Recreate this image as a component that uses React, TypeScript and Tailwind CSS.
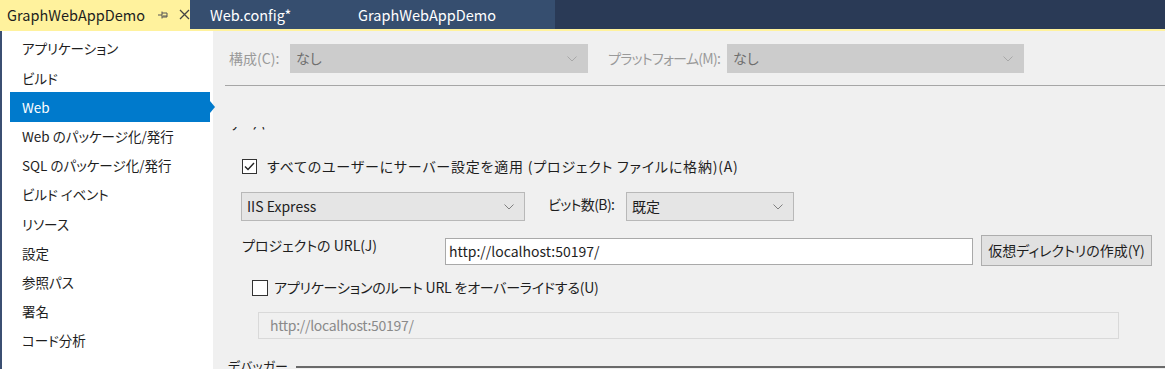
const items = [
  "アプリケーション",
  "ビルド",
  "Web",
  "Web のパッケージ化/発行",
  "SQL のパッケージ化/発行",
  "ビルド イベント",
  "リソース",
  "設定",
  "参照パス",
  "署名",
  "コード分析",
];

function Chevron({ color = "#8a8a8a" }: { color?: string }) {
  return (
    <svg width="10" height="6" viewBox="0 0 10 6">
      <path d="M0.5 0.5 L5 5 L9.5 0.5" fill="none" stroke={color} strokeWidth="1" />
    </svg>
  );
}

function Select({ text, width, disabled }: { text: string; width: string; disabled?: boolean }) {
  return (
    <div
      className={`${width} h-[29px] shrink-0 flex items-center justify-between pl-[5px] pr-[10px] border ${
        disabled ? "bg-[#cccccc] border-[#cccccc] text-[#6e6e6e]" : "bg-[#e5e5e5] border-[#b8b8b8] text-[#1e1e1e]"
      }`}
    >
      <span>{text}</span>
      <Chevron color={disabled ? "#a8a8a8" : "#808080"} />
    </div>
  );
}

function CheckBox({ checked, size }: { checked?: boolean; size: string }) {
  return (
    <div className={`${size} bg-white border border-[#333333] flex items-center justify-center shrink-0`}>
      {checked && (
        <svg width="11" height="9" viewBox="0 0 11 9">
          <path d="M1 4.5 L4 7.5 L10 1" fill="none" stroke="#222" strokeWidth="1.4" />
        </svg>
      )}
    </div>
  );
}

export default function App() {
  return (
    <div className="w-[1165px] h-[369px] overflow-hidden flex flex-col whitespace-nowrap text-[14px] text-[#1e1e1e] font-['Noto_Sans_CJK_JP','Noto_Sans',sans-serif] [font-feature-settings:'palt']">
      {/* tab strip */}
      <div className="h-[29px] flex bg-[#2a3a56] shrink-0">
        <div className="w-[190px] bg-[#fff29d] flex items-center pl-[7px] text-[14.5px] text-[#1e1e1e]">
          <span className="w-[143px]">GraphWebAppDemo</span>
          <svg className="ml-[8px]" width="11" height="10" viewBox="0 0 11 10">
            <path d="M0 5 H4 M4 1.5 V8.5 M4 3 H9 V7 H4 M5 6 H9" fill="none" stroke="#555" strokeWidth="1" />
          </svg>
          <svg className="ml-[10px]" width="11" height="11" viewBox="0 0 11 11">
            <path d="M1 1 L10 10 M10 1 L1 10" fill="none" stroke="#444" strokeWidth="1.3" />
          </svg>
        </div>
        <div className="w-[365px] bg-[#364e6f] flex items-center text-[14.5px] text-white">
          <span className="ml-[20px] w-[148px]">Web.config*</span>
          <span>GraphWebAppDemo</span>
        </div>
      </div>
      <div className="h-[2px] bg-[#fff29d] shrink-0" />

      <div className="flex flex-1 min-h-0">
        <div className="w-[2px] bg-[#3b4f72] shrink-0" />

        {/* sidebar */}
        <div className="w-[211px] bg-white pt-[3px] shrink-0 text-[13.5px]">
          {items.map((it) =>
            it === "Web" ? (
              <div key={it} className="h-[29.2px] relative ml-[8px] mr-[3px] bg-[#007acc] text-white flex items-center pl-[12px]">
                {it}
                <div className="absolute right-[-5px] top-1/2 -translate-y-1/2 w-0 h-0 border-y-[6px] border-y-transparent border-l-[5px] border-l-[#007acc]" />
              </div>
            ) : (
              <div key={it} className="h-[29.2px] flex items-center pl-[20px]">
                {it}
              </div>
            )
          )}
        </div>

        {/* content */}
        <div className="flex-1 bg-[#f0f0f0] min-w-0">
          <div className="pt-[13px] flex items-center">
            <span className="ml-[16px] w-[61px] shrink-0 text-[#9a9a9a]">構成(C):</span>
            <Select text="なし" width="w-[298px]" disabled />
            <span className="ml-[20px] w-[119px] shrink-0 text-[#9a9a9a] tracking-[-0.7px]">プラットフォーム(M):</span>
            <Select text="なし" width="w-[297px]" disabled />
          </div>
          <div className="mt-[12px] ml-[12px] h-px bg-[#a6a6a6]" />

          <div className="mt-[41px] ml-[15px] h-[6px] overflow-hidden">
            <div className="-mt-[13px] leading-[20px] text-[13px]">サーバー</div>
          </div>

          <div className="mt-[23px] ml-[29px] h-[20px] flex items-center">
            <CheckBox checked size="w-[15px] h-[15px]" />
            <span className="ml-[10px] tracking-[0.8px]">すべてのユーザーにサーバー設定を適用 (プロジェクト ファイルに格納)(A)</span>
          </div>

          <div className="mt-[16px] ml-[28px] flex items-center">
            <Select text="IIS Express" width="w-[284px]" />
            <span className="ml-[23px] w-[78px] shrink-0 -mt-[5px] tracking-[-0.6px]">ビット数(B):</span>
            <Select text="既定" width="w-[168px]" />
          </div>

          <div className="mt-[14px] ml-[29px] flex items-start">
            <span className="w-[203px] shrink-0 leading-[18px] mt-[1px]">プロジェクトの URL(J)</span>
            <div className="w-[528px] h-[27px] mt-[3px] shrink-0 bg-white border border-[#a9a9a9] flex items-center pl-[3px]">
              http://localhost:50197/
            </div>
            <div className="ml-[8px] w-[171px] h-[31px] shrink-0 bg-[#e1e1e1] border border-[#adadad] flex items-center justify-center">
              仮想ディレクトリの作成(Y)
            </div>
          </div>

          <div className="mt-[12px] ml-[39px] h-[19px] flex items-center">
            <CheckBox size="w-[16px] h-[16px]" />
            <span className="ml-[6px] tracking-[-0.2px]">アプリケーションのルート URL をオーバーライドする(U)</span>
          </div>

          <div className="mt-[15px] ml-[45px] w-[861px] h-[27px] border border-[#d9d9d9] flex items-center pl-[11px] text-[#8a8a8a] tracking-[-0.3px]">
            http://localhost:50197/
          </div>

          <div className="mt-[17px] ml-[15px] h-[20px] flex items-center">
            <span className="text-[13px]">デバッガー</span>
            <div className="flex-1 ml-[8px] h-[2px] bg-[#6a6a6a] mt-[2px]" />
          </div>
        </div>
      </div>
    </div>
  );
}
